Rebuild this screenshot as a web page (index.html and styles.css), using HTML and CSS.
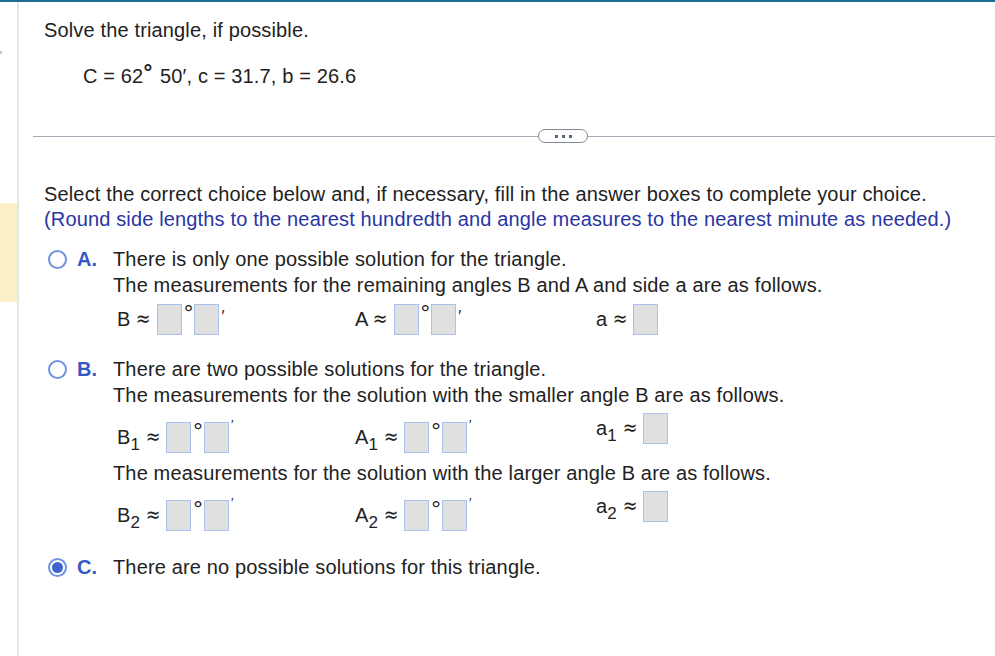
FILE: index.html
```html
<!DOCTYPE html>
<html lang="en">
  <head>
    <meta charset="UTF-8" />
    <title>Solve the triangle</title>
    <link rel="stylesheet" href="styles.css">
  </head>
  <body>
    <div class="topbar"></div>
    <div class="page">
      <div class="gutter">
        <div class="tick"></div>
        <div class="marker"></div>
      </div>
      <div class="main">
        <div class="question">
          <p class="prompt">Solve the triangle, if possible.</p>
          <p class="given">C = 62<sup class="deg">°</sup> 50′, c = 31.7, b = 26.6</p>
        </div>

        <div class="divider">
          <span class="line left"></span>
          <span class="more"><i></i><i></i><i></i></span>
          <span class="line"></span>
        </div>

        <div class="answer">
          <p class="instr">Select the correct choice below and, if necessary, fill in the answer boxes to complete your choice.</p>
          <p class="hint">(Round side lengths to the nearest hundredth and angle measures to the nearest minute as needed.)</p>

          <div class="choice choice-a">
            <span class="radio"></span>
            <span class="letter">A.</span>
            <div class="body">
              <p>There is only one possible solution for the triangle.</p>
              <p>The measurements for the remaining angles B and A and side a are as follows.</p>
              <div class="row row-a">
                <div class="cell"><span class="lbl">B <span class="ap">≈</span></span><span class="box"></span><span class="dg">°</span><span class="box"></span><span class="pr">′</span></div>
                <div class="cell"><span class="lbl">A <span class="ap">≈</span></span><span class="box"></span><span class="dg">°</span><span class="box"></span><span class="pr">′</span></div>
                <div class="cell"><span class="lbl">a <span class="ap">≈</span></span><span class="box"></span></div>
              </div>
            </div>
          </div>

          <div class="choice choice-b">
            <span class="radio"></span>
            <span class="letter">B.</span>
            <div class="body">
              <p>There are two possible solutions for the triangle.</p>
              <p>The measurements for the solution with the smaller angle B are as follows.</p>
              <div class="row row-b">
                <div class="cell"><span class="lbl">B<sub>1</sub> <span class="ap">≈</span></span><span class="box"></span><span class="dg">°</span><span class="box"></span><span class="pr up">′</span></div>
                <div class="cell"><span class="lbl">A<sub>1</sub> <span class="ap">≈</span></span><span class="box"></span><span class="dg">°</span><span class="box"></span><span class="pr up">′</span></div>
                <div class="cell side"><span class="lbl">a<sub>1</sub> <span class="ap">≈</span></span><span class="box"></span></div>
              </div>
              <p>The measurements for the solution with the larger angle B are as follows.</p>
              <div class="row row-b">
                <div class="cell"><span class="lbl">B<sub>2</sub> <span class="ap">≈</span></span><span class="box"></span><span class="dg">°</span><span class="box"></span><span class="pr up">′</span></div>
                <div class="cell"><span class="lbl">A<sub>2</sub> <span class="ap">≈</span></span><span class="box"></span><span class="dg">°</span><span class="box"></span><span class="pr up">′</span></div>
                <div class="cell side"><span class="lbl">a<sub>2</sub> <span class="ap">≈</span></span><span class="box"></span></div>
              </div>
            </div>
          </div>

          <div class="choice choice-c">
            <span class="radio checked"></span>
            <span class="letter">C.</span>
            <div class="body">
              <p>There are no possible solutions for this triangle.</p>
            </div>
          </div>
        </div>
      </div>
    </div>
  </body>
</html>
```

FILE: styles.css
```css
body {
  margin: 0;
  background: #fff;
  color: #222;
  font-family: "Liberation Sans", Arial, sans-serif;
  font-size: 20px;
  line-height: 25px;
  letter-spacing: 0.15px;
  overflow: hidden;
}

p {
  margin: 0;
}

.topbar {
  height: 2px;
  background: #1f6b92;
}

.page {
  display: flex;
  height: 654px;
}

.gutter {
  width: 17px;
  border-right: 2px solid #e2e7ee;
  flex-shrink: 0;
}

.tick {
  width: 2px;
  height: 3px;
  margin-top: 49px;
  background: #c8c8c8;
}

.marker {
  height: 99px;
  margin-top: 149px;
  background: #fbefc7;
}

.main {
  flex: 1;
  padding-left: 14px;
}

.question {
  padding: 16px 0 0 11px;
}

.given {
  margin-top: 21px;
  padding-left: 39px;
}

.deg {
  font-size: 22px;
  font-weight: bold;
  line-height: 0;
  vertical-align: 3px;
  margin-right: 2px;
}

.divider {
  display: flex;
  align-items: center;
  margin-top: 40px;
  height: 14px;
}

.line {
  flex: 1;
  height: 1px;
  background: #a3acb6;
}

.line.left {
  flex: 0 0 505px;
}

.more {
  display: flex;
  gap: 4px;
  justify-content: center;
  align-items: center;
  width: 48px;
  height: 12px;
  border: 1px solid #7d8894;
  border-radius: 8px;
}

.more i {
  width: 3px;
  height: 3px;
  background: #5d6873;
}

.answer {
  padding: 39px 0 0 11px;
}

.hint {
  color: #2a35a3;
}

.choice {
  display: flex;
  align-items: flex-start;
}

.choice-a {
  margin-top: 15px;
}

.choice-b {
  margin-top: 22px;
}

.choice-c {
  margin-top: 16px;
}

.radio {
  width: 15px;
  height: 15px;
  margin: 3px 0 0 4px;
  border: 2px solid #7093e0;
  border-radius: 50%;
  flex-shrink: 0;
  position: relative;
}

.radio.checked::after {
  content: "";
  position: absolute;
  left: 2px;
  top: 2px;
  width: 11px;
  height: 11px;
  border-radius: 50%;
  background: #3e63cf;
}

.letter {
  width: 36px;
  margin-left: 10px;
  color: #3658c3;
  font-weight: bold;
}

.body p + p {
  margin-top: 1px;
}

.row {
  display: grid;
  grid-template-columns: 238px 241px 120px;
  padding-left: 4px;
}

.row-a {
  padding-top: 6px;
}

.row-b {
  padding: 14px 0 8px 4px;
}

.row-b .cell.side {
  margin-top: -9px;
}

.cell {
  display: flex;
  align-items: center;
  height: 31px;
}

.lbl {
  white-space: pre;
  margin-right: 6px;
}

.ap {
  display: inline-block;
  font-family: "DejaVu Sans", sans-serif;
  font-size: 22px;
  line-height: 20px;
  letter-spacing: 0;
  transform: scaleX(0.8);
  margin: 0 -2px;
}

.lbl sub {
  font-size: 17px;
  line-height: 0;
  vertical-align: -6px;
}

.box {
  display: inline-block;
  width: 23px;
  height: 29px;
  background: #e0e0e0;
  border: 1px solid #a9c1ec;
}

.dg {
  align-self: flex-start;
  margin: -4px 1px 0 2px;
  font-size: 24px;
}

.pr {
  align-self: flex-start;
  margin-left: 2px;
  font-size: 16px;
}

.pr.up {
  margin-top: -10px;
  font-size: 13px;
}
```
